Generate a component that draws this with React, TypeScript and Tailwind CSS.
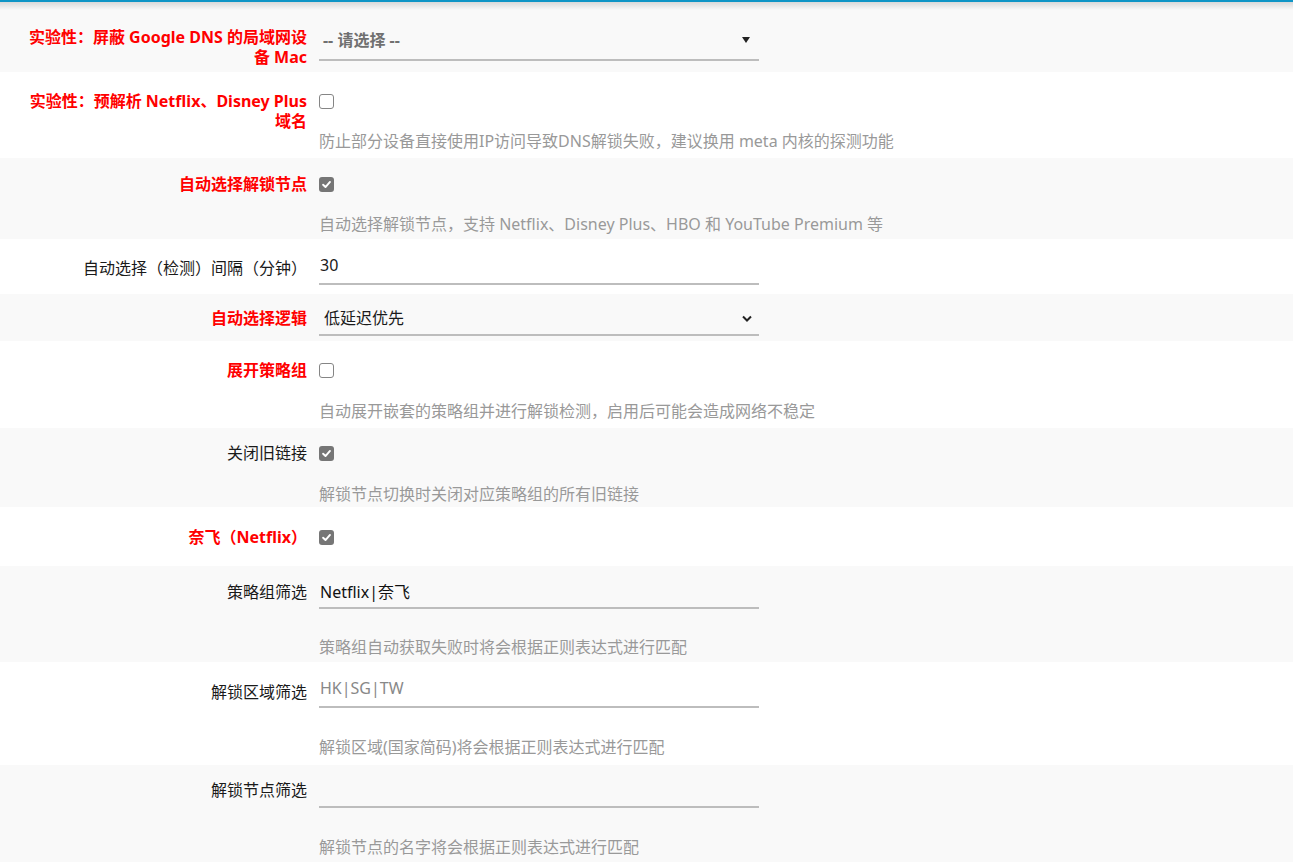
import React from "react";

function Check({ on }: { on: boolean }) {
  return (
    <div className="flex h-[20px] items-center">
      {on ? (
        <span className="inline-flex h-[15px] w-[15px] items-center justify-center rounded-[3px] bg-[#767676]">
          <svg viewBox="0 0 12 12" className="h-[11px] w-[11px]">
            <path d="M2.3 6.3 L4.9 8.8 L9.8 3.2" stroke="#fff" strokeWidth="2.1" fill="none" strokeLinecap="round" strokeLinejoin="round" />
          </svg>
        </span>
      ) : (
        <span className="inline-block h-[15px] w-[15px] rounded-[3px] border border-[#858585] bg-white" />
      )}
    </div>
  );
}

function Desc({ children, cls }: { children: React.ReactNode; cls: string }) {
  return <div className={"h-[20px] whitespace-nowrap text-[#999999] " + cls}>{children}</div>;
}

const red = "font-bold text-[#ff0000]";
const black = "text-[#1a1a1a]";

export default function App() {
  return (
    <div className="min-h-screen w-full bg-white font-['Noto_Sans','Noto_Sans_CJK_SC',sans-serif] text-[16px] leading-[20px]">
      <div className="h-[2px] bg-[#0f95c6]" />
      <div className="h-[8px] bg-linear-to-b from-[#d9d9d9] to-[#f9f9f9]" />

      {/* Row 1 */}
      <div className="flex bg-[#f9f9f9]">
        <div className={"w-[307px] shrink-0 pt-[17px] pb-[5px] text-right " + red}>
          <div>实验性：屏蔽 Google DNS 的局域网设</div>
          <div>备 Mac</div>
        </div>
        <div className="ml-[12px] pt-[20px]">
          <div className="flex w-[440px] items-center justify-between border-b-2 border-[#bdbdbd] pb-[9px] pl-[4px] pr-[9px]">
            <span className="font-bold text-[#707070]">-- 请选择 --</span>
            <svg viewBox="0 0 8 6" className="h-[6px] w-[8px]">
              <path d="M0 0 L8 0 L4 6 Z" fill="#222" />
            </svg>
          </div>
        </div>
      </div>

      {/* Row 2 */}
      <div className="flex bg-white">
        <div className={"w-[307px] shrink-0 pt-[19px] text-right " + red}>
          <div>实验性：预解析 Netflix、Disney Plus</div>
          <div>域名</div>
        </div>
        <div className="ml-[12px] pt-[19px] pb-[7px]">
          <Check on={false} />
          <Desc cls="mt-[20px]">防止部分设备直接使用IP访问导致DNS解锁失败，建议换用 meta 内核的探测功能</Desc>
        </div>
      </div>

      {/* Row 3 */}
      <div className="flex bg-[#f9f9f9]">
        <div className={"w-[307px] shrink-0 pt-[16px] text-right " + red}>自动选择解锁节点</div>
        <div className="ml-[12px] pt-[16px] pb-[5px]">
          <Check on={true} />
          <Desc cls="mt-[20px]">自动选择解锁节点，支持 Netflix、Disney Plus、HBO 和 YouTube Premium 等</Desc>
        </div>
      </div>

      {/* Row 4 */}
      <div className="flex bg-white">
        <div className={"w-[307px] shrink-0 pt-[19px] text-right " + black}>自动选择（检测）间隔（分钟）</div>
        <div className="ml-[12px] pt-[16px] pb-[9px]">
          <div className="w-[440px] border-b-2 border-[#bdbdbd] pb-[8px] pl-[1px] text-[#1a1a1a]">30</div>
        </div>
      </div>

      {/* Row 5 */}
      <div className="flex bg-[#f9f9f9]">
        <div className={"w-[307px] shrink-0 pt-[14px] text-right " + red}>自动选择逻辑</div>
        <div className="ml-[12px] pt-[14px] pb-[5px]">
          <div className="flex w-[440px] items-center justify-between border-b-2 border-[#bdbdbd] pb-[6px] pl-[5px] pr-[6px]">
            <span className="text-[#1a1a1a]">低延迟优先</span>
            <svg viewBox="0 0 12 8" className="mt-[2px] h-[8px] w-[12px]">
              <path d="M2 1.5 L6 5.5 L10 1.5" stroke="#222" strokeWidth="2" fill="none" />
            </svg>
          </div>
        </div>
      </div>

      {/* Row 6 */}
      <div className="flex bg-white">
        <div className={"w-[307px] shrink-0 pt-[19px] text-right " + red}>展开策略组</div>
        <div className="ml-[12px] pt-[19px] pb-[7px]">
          <Check on={false} />
          <Desc cls="mt-[21px]">自动展开嵌套的策略组并进行解锁检测，启用后可能会造成网络不稳定</Desc>
        </div>
      </div>

      {/* Row 7 */}
      <div className="flex bg-[#f9f9f9]">
        <div className={"w-[307px] shrink-0 pt-[15px] text-right " + black}>关闭旧链接</div>
        <div className="ml-[12px] pt-[15px] pb-[3px]">
          <Check on={true} />
          <Desc cls="mt-[21px]">解锁节点切换时关闭对应策略组的所有旧链接</Desc>
        </div>
      </div>

      {/* Row 8 */}
      <div className="flex bg-white">
        <div className={"w-[307px] shrink-0 pt-[20px] text-right " + red}>奈飞（Netflix）</div>
        <div className="ml-[12px] pt-[20px] pb-[19px]">
          <Check on={true} />
        </div>
      </div>

      {/* Row 9 */}
      <div className="flex bg-[#f9f9f9]">
        <div className={"w-[307px] shrink-0 pt-[16px] text-right " + black}>策略组筛选</div>
        <div className="ml-[12px] pt-[16px] pb-[5px]">
          <div className="h-[27px] w-[440px] border-b-2 border-[#bdbdbd] pb-[5px] pl-[1px] text-[#111]">Netflix|奈飞</div>
          <Desc cls="mt-[28px]">策略组自动获取失败时将会根据正则表达式进行匹配</Desc>
        </div>
      </div>

      {/* Row 10 */}
      <div className="flex bg-white">
        <div className={"w-[307px] shrink-0 pt-[20px] text-right " + black}>解锁区域筛选</div>
        <div className="ml-[12px] pt-[16px] pb-[8px]">
          <div className="h-[30px] w-[440px] border-b-2 border-[#bdbdbd] pb-[8px] pl-[1px] text-[#888888]">HK|SG|TW</div>
          <Desc cls="mt-[29px]">解锁区域(国家简码)将会根据正则表达式进行匹配</Desc>
        </div>
      </div>

      {/* Row 11 */}
      <div className="flex bg-[#f9f9f9]">
        <div className={"w-[307px] shrink-0 pt-[15px] text-right " + black}>解锁节点筛选</div>
        <div className="ml-[12px] pt-[16px] pb-[5px]">
          <div className="h-[27px] w-[440px] border-b-2 border-[#bdbdbd] pb-[5px]" />
          <Desc cls="mt-[29px]">解锁节点的名字将会根据正则表达式进行匹配</Desc>
        </div>
      </div>
    </div>
  );
}
